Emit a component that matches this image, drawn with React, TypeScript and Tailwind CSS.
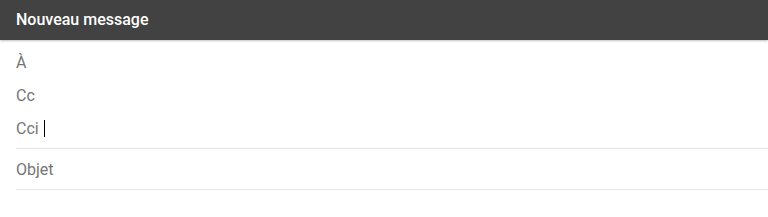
export default function App() {
  return (
    <div className="w-[768px] h-[217px] bg-white overflow-hidden font-['Roboto',sans-serif]">
      <div className="h-10 bg-[#424242] px-4 flex items-center shadow-[0_1px_2px_rgba(0,0,0,0.25)] relative">
        <span className="text-white text-[16px] font-medium">Nouveau message</span>
      </div>
      <div className="ml-4 pt-[6px] pb-[3px] border-b border-[#e6e6e6] text-[16px] text-[#757575]">
        <div className="h-[33px] flex items-center">À</div>
        <div className="h-[33px] flex items-center">Cc</div>
        <div className="h-[33px] flex items-center">
          <span>Cci</span>
          <span className="ml-[5px] w-px h-[17px] bg-black"></span>
        </div>
      </div>
      <div className="ml-4 h-[41px] pt-[2px] border-b border-[#e6e6e6] flex items-center text-[16px] text-[#757575]">
        Objet
      </div>
    </div>
  );
}
